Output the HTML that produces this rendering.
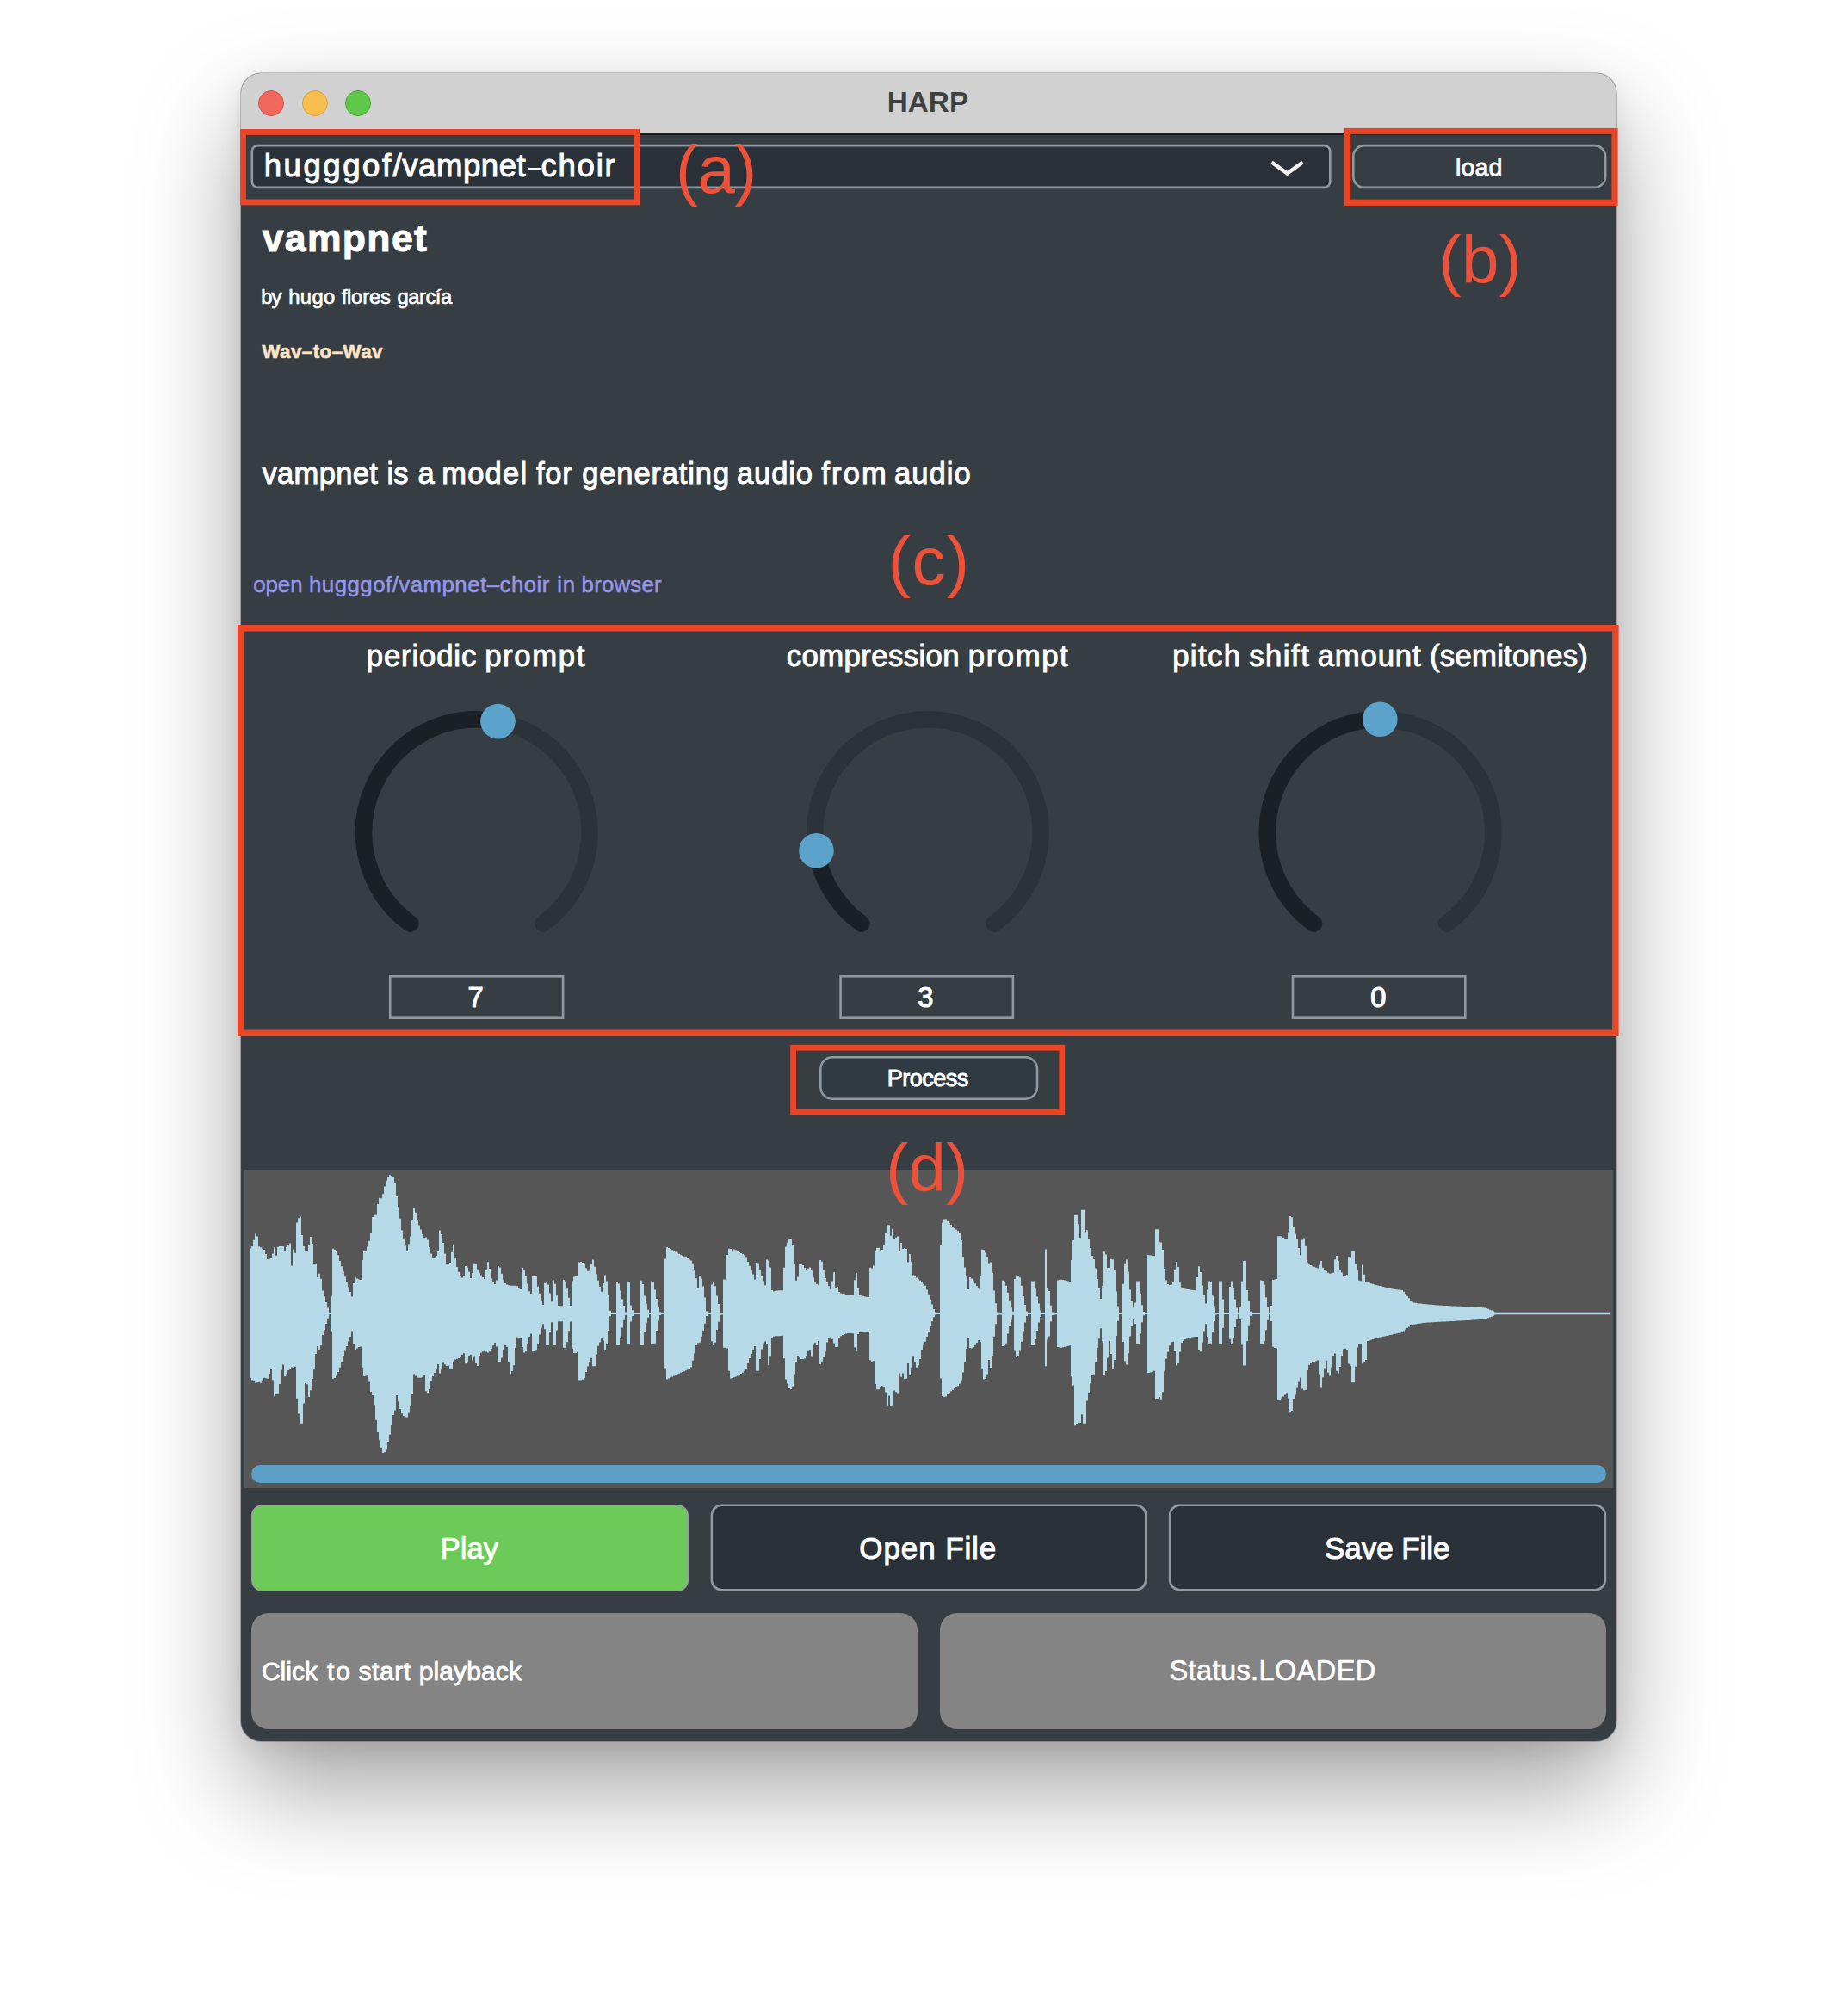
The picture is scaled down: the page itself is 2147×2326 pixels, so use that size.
<!DOCTYPE html>
<html><head><meta charset="utf-8"><title>HARP</title>
<style>

html,body{margin:0;padding:0;}
body{width:2147px;height:2326px;background:#fff;position:relative;overflow:hidden;font-family:"Liberation Sans",sans-serif;}
.abs{position:absolute;box-sizing:border-box;}
.t{position:absolute;line-height:1;white-space:pre;}
#win{left:280px;top:85px;width:1598px;height:1938px;border-radius:23.5px;background:#363e44;
  box-shadow:0 0 0 0.8px rgba(0,0,0,0.28), 0 54px 120px rgba(0,0,0,0.37), 0 10px 30px rgba(0,0,0,0.07);overflow:hidden;}
#titlebar{left:0;top:0;width:100%;height:72px;background:#d0d1d0;border-bottom:2px solid #181d23;}
.light{position:absolute;width:30px;height:30px;border-radius:50%;box-sizing:border-box;top:105px;}
.rb{position:absolute;box-sizing:border-box;border:7px solid #e94526;}
.btn{position:absolute;box-sizing:border-box;border:2px solid #9098a1;}
svg{position:absolute;left:0;top:0;}

</style></head><body>
<div id="win" class="abs">
<div id="titlebar" class="abs"></div>
</div>
<div class="light" style="left:299.9px;background:#f1675d;border:1px solid #d9534a;"></div>
<div class="light" style="left:350.8px;background:#f6be4f;border:1px solid #d8a23d;"></div>
<div class="light" style="left:401.2px;background:#5fc84a;border:1px solid #4aa73a;"></div>
<div class="abs" style="left:284.4px;top:1358.6px;width:1589.3px;height:370.9px;background:#565656;"></div>
<div class="abs" style="left:291.6px;top:1701.6px;width:1574.6px;height:21.1px;border-radius:11px;background:#5c9fc7;"></div>
<div class="btn" style="left:291.6px;top:1747.5px;width:508.4px;height:101px;border-radius:13px;background:#6cca58;border:2px solid #93a793;"></div>
<div class="abs" style="left:291.6px;top:1874px;width:774.7px;height:135px;border-radius:20px;background:#848484;"></div>
<div class="abs" style="left:1091.6px;top:1874px;width:774.6px;height:135px;border-radius:20px;background:#848484;"></div>
<svg width="2147" height="2326" viewBox="0 0 2147 2326">
<rect x="292.80" y="169.10" width="1252.50" height="48.80" rx="6.7" fill="#2a3138" stroke="#9098a1" stroke-width="2.6"/>
<rect x="1572.30" y="169.10" width="292.80" height="48.80" rx="12.7" fill="none" stroke="#9098a1" stroke-width="2.6"/>
<rect x="453.20" y="1134.30" width="200.90" height="48.40" rx="0.0" fill="none" stroke="#9098a1" stroke-width="2.6"/>
<rect x="976.60" y="1134.30" width="200.30" height="48.40" rx="0.0" fill="none" stroke="#9098a1" stroke-width="2.6"/>
<rect x="1502.00" y="1134.30" width="200.30" height="48.40" rx="0.0" fill="none" stroke="#9098a1" stroke-width="2.6"/>
<rect x="953.30" y="1228.30" width="251.70" height="48.40" rx="13.7" fill="#2f3a42" stroke="#9098a1" stroke-width="2.6"/>
<rect x="826.90" y="1748.80" width="504.40" height="98.40" rx="11.7" fill="#2a3138" stroke="#9098a1" stroke-width="2.6"/>
<rect x="1359.10" y="1748.80" width="505.80" height="98.40" rx="11.7" fill="#2a3138" stroke="#9098a1" stroke-width="2.6"/>
<path d="M1477.5 188.5 L1495.5 201.5 L1513.5 188.5" fill="none" stroke="#f2f2f2" stroke-width="4.6" stroke-linecap="butt" stroke-linejoin="miter"/>
<path d="M476.68 1073.14 A131.2 131.2 0 1 1 630.92 1073.14" fill="none" stroke="#2b3239" stroke-width="19.5" stroke-linecap="round"/>
<path d="M476.68 1073.14 A131.2 131.2 0 0 1 578.49 838.14" fill="none" stroke="#1b2025" stroke-width="19.5" stroke-linecap="round"/>
<circle cx="578.49" cy="838.14" r="20.3" fill="#5ca3cb"/>
<path d="M1000.78 1073.14 A131.2 131.2 0 1 1 1155.02 1073.14" fill="none" stroke="#2b3239" stroke-width="19.5" stroke-linecap="round"/>
<path d="M1000.78 1073.14 A131.2 131.2 0 0 1 948.44 988.33" fill="none" stroke="#1b2025" stroke-width="19.5" stroke-linecap="round"/>
<circle cx="948.44" cy="988.33" r="20.3" fill="#5ca3cb"/>
<path d="M1526.48 1073.14 A131.2 131.2 0 1 1 1680.72 1073.14" fill="none" stroke="#2b3239" stroke-width="19.5" stroke-linecap="round"/>
<path d="M1526.48 1073.14 A131.2 131.2 0 0 1 1603.30 835.80" fill="none" stroke="#1b2025" stroke-width="19.5" stroke-linecap="round"/>
<circle cx="1603.30" cy="835.80" r="20.3" fill="#5ca3cb"/>
<path d="M290 1450.6V1450.6H292V1447.9H294V1440.7H296V1433.5H298V1436.5H300V1448.3H302V1449.3H304V1450.6H306V1452.1H308V1457.1H310V1463.0H312V1462.5H314V1461.9H316V1456.6H318V1449.1H320V1458.8H322V1448.8H324V1448.1H326V1448.0H328V1448.0H330V1453.2H332V1449.1H334V1445.9H336V1444.6H338V1470.4H340V1451.5H342V1455.8H344V1420.4H346V1415.2H348V1413.5H350V1434.9H352V1448.1H354V1454.2H356V1453.1H358V1446.9H360V1436.9H362V1445.1H364V1467.9H366V1468.4H368V1483.9H370V1479.8H372V1485.7H374V1499.6H376V1506.3H378V1512.9H380V1519.4H382V1525.3H384V1505.6H386V1450.7H388V1451.8H390V1454.1H392V1458.3H394V1465.0H396V1471.2H398V1477.2H400V1483.2H402V1489.2H404V1495.2H406V1501.0H408V1506.5H410V1491.0H412V1484.2H414V1485.4H416V1486.6H418V1487.1H420V1463.9H422V1453.9H424V1453.4H426V1448.4H428V1441.8H430V1431.9H432V1413.9H434V1411.4H436V1411.6H438V1399.1H440V1391.8H442V1392.2H444V1387.3H446V1378.6H448V1371.8H450V1367.3H452V1365.3H454V1366.0H456V1368.1H458V1374.8H460V1389.9H462V1402.3H464V1415.8H466V1429.3H468V1438.7H470V1445.7H472V1454.1H474V1445.2H476V1436.5H478V1417.0H480V1403.8H482V1408.8H484V1417.0H486V1423.6H488V1428.6H490V1433.7H492V1438.3H494V1437.4H496V1440.5H498V1449.1H500V1456.5H502V1462.0H504V1461.7H506V1459.0H508V1454.0H510V1429.6H512V1433.9H514V1444.0H516V1456.6H518V1467.9H520V1468.1H522V1467.1H524V1454.7H526V1445.7H528V1462.2H530V1471.9H532V1477.7H534V1482.2H536V1484.5H538V1482.2H540V1470.9H542V1472.6H544V1477.6H546V1484.9H548V1479.1H550V1467.8H552V1468.3H554V1474.7H556V1478.7H558V1481.5H560V1484.0H562V1486.0H564V1476.0H566V1466.3H568V1474.0H570V1485.3H572V1489.2H574V1492.1H576V1487.5H578V1471.1H580V1472.5H582V1479.7H584V1486.5H586V1490.9H588V1492.4H590V1493.2H592V1493.7H594V1493.8H596V1493.8H598V1493.8H600V1494.3H602V1496.3H604V1498.0H606V1473.1H608V1475.7H610V1482.3H612V1491.6H614V1500.3H616V1503.0H618V1483.0H620V1482.4H622V1482.3H624V1494.7H626V1502.7H628V1510.7H630V1516.0H632V1490.8H634V1488.7H636V1492.6H638V1502.6H640V1512.2H642V1487.6H644V1491.7H646V1505.3H648V1517.0H650V1517.2H652V1517.2H654V1487.0H656V1489.5H658V1497.2H660V1507.7H662V1517.0H664V1488.5H666V1483.5H668V1483.0H670V1483.0H672V1466.6H674V1466.0H676V1466.9H678V1469.2H680V1473.2H682V1476.7H684V1476.6H686V1468.6H688V1463.6H690V1471.7H692V1480.3H694V1487.7H696V1494.8H698V1500.8H700V1491.1H702V1481.5H704V1488.5H706V1504.5H708V1522.8H710V1525.3H712V1525.3H714V1525.3H716V1489.0H718V1491.4H720V1499.5H722V1509.2H724V1517.1H726V1524.4H728V1488.7H730V1489.2H732V1516.5H734V1522.2H736V1525.3H738V1525.3H740V1525.3H742V1525.3H744V1487.8H746V1492.0H748V1505.5H750V1514.8H752V1521.7H754V1525.3H756V1488.2H758V1489.5H760V1498.6H762V1509.0H764V1518.4H766V1524.2H768V1525.3H770V1525.3H772V1462.6H774V1449.1H776V1450.0H778V1451.1H780V1452.3H782V1453.5H784V1454.6H786V1455.8H788V1456.8H790V1457.8H792V1458.8H794V1459.8H796V1460.8H798V1462.0H800V1463.3H802V1464.6H804V1467.8H806V1474.9H808V1485.2H810V1496.4H812V1482.0H814V1485.5H816V1494.4H818V1507.6H820V1523.4H822V1525.3H824V1525.3H826V1492.5H828V1489.1H830V1494.3H832V1505.6H834V1514.9H836V1525.3H838V1525.3H840V1486.6H842V1486.6H844V1457.9H846V1450.7H848V1451.1H850V1452.9H852V1451.6H854V1452.3H856V1453.6H858V1454.9H860V1456.0H862V1457.0H864V1458.2H866V1461.6H868V1465.9H870V1470.7H872V1475.7H874V1480.5H876V1486.4H878V1467.1H880V1467.5H882V1475.2H884V1483.0H886V1488.3H888V1493.3H890V1463.5H892V1464.5H894V1472.4H896V1499.1H898V1500.3H900V1499.9H902V1499.6H904V1499.2H906V1499.2H908V1499.2H910V1472.8H912V1448.6H914V1443.7H916V1439.2H918V1439.5H920V1445.9H922V1468.5H924V1487.8H926V1483.5H928V1468.7H930V1468.7H932V1469.9H934V1472.9H936V1474.9H938V1473.8H940V1472.5H942V1474.7H944V1484.3H946V1490.3H948V1491.8H950V1492.8H952V1463.9H954V1465.8H956V1475.5H958V1484.9H960V1489.9H962V1494.3H964V1498.3H966V1488.4H968V1478.3H970V1496.2H972V1494.9H974V1500.9H976V1502.4H978V1503.0H980V1503.5H982V1503.9H984V1504.1H986V1504.4H988V1504.6H990V1504.6H992V1487.3H994V1478.8H996V1496.7H998V1504.7H1000V1505.3H1002V1505.8H1004V1506.4H1006V1506.7H1008V1507.1H1010V1472.7H1012V1473.4H1014V1470.4H1016V1453.8H1018V1449.8H1020V1449.8H1022V1452.8H1024V1452.1H1026V1446.4H1028V1432.6H1030V1422.8H1032V1423.2H1034V1435.8H1036V1427.8H1038V1439.0H1040V1437.7H1042V1436.4H1044V1453.6H1046V1444.0H1048V1451.1H1050V1449.9H1052V1450.9H1054V1466.4H1056V1457.1H1058V1465.7H1060V1481.4H1062V1482.9H1064V1484.6H1066V1486.3H1068V1487.7H1070V1489.7H1072V1491.7H1074V1493.7H1076V1498.6H1078V1503.7H1080V1509.7H1082V1515.5H1084V1521.0H1086V1524.6H1088V1525.3H1090V1525.3H1092V1446.6H1094V1420.7H1096V1416.6H1098V1416.3H1100V1418.8H1102V1421.0H1104V1423.0H1106V1425.0H1108V1426.8H1110V1428.5H1112V1430.2H1114V1432.6H1116V1441.0H1118V1460.6H1120V1472.5H1122V1483.2H1124V1497.9H1126V1484.0H1128V1485.4H1130V1488.2H1132V1491.2H1134V1494.2H1136V1497.2H1138V1482.6H1140V1451.7H1142V1452.3H1144V1455.6H1146V1460.5H1148V1467.6H1150V1466.6H1152V1479.0H1154V1499.6H1156V1514.2H1158V1524.4H1160V1524.7H1162V1525.0H1164V1487.7H1166V1489.4H1168V1493.7H1170V1501.7H1172V1510.8H1174V1518.4H1176V1523.8H1178V1486.1H1180V1481.4H1182V1482.2H1184V1484.2H1186V1493.7H1188V1506.0H1190V1516.0H1192V1523.4H1194V1525.3H1196V1525.3H1198V1488.4H1200V1488.4H1202V1497.5H1204V1506.4H1206V1514.4H1208V1522.4H1210V1525.3H1212V1525.3H1214V1451.6H1216V1496.0H1218V1499.9H1220V1516.8H1222V1524.5H1224V1524.7H1226V1525.0H1228V1487.4H1230V1486.9H1232V1486.7H1234V1487.1H1236V1487.6H1238V1488.1H1240V1488.6H1242V1489.1H1244V1464.0H1246V1441.1H1248V1411.7H1250V1411.8H1252V1422.2H1254V1438.2H1256V1405.7H1258V1405.7H1260V1431.3H1262V1429.2H1264V1439.2H1266V1450.1H1268V1459.1H1270V1463.1H1272V1473.4H1274V1486.1H1276V1497.1H1278V1509.1H1280V1493.8H1282V1454.3H1284V1457.5H1286V1472.9H1288V1473.0H1290V1462.7H1292V1463.3H1294V1475.4H1296V1500.5H1298V1517.5H1300V1525.3H1302V1525.3H1304V1491.7H1306V1467.8H1308V1463.5H1310V1477.5H1312V1498.5H1314V1511.4H1316V1519.2H1318V1513.6H1320V1488.4H1322V1488.4H1324V1502.8H1326V1516.2H1328V1524.1H1330V1525.3H1332V1458.0H1334V1458.2H1336V1458.6H1338V1459.0H1340V1459.3H1342V1428.2H1344V1428.2H1346V1442.8H1348V1443.4H1350V1452.1H1352V1473.9H1354V1487.4H1356V1492.1H1358V1492.9H1360V1492.4H1362V1490.1H1364V1475.9H1366V1466.0H1368V1471.9H1370V1490.2H1372V1495.8H1374V1496.6H1376V1497.4H1378V1497.7H1380V1498.1H1382V1498.4H1384V1498.7H1386V1499.1H1388V1499.2H1390V1484.1H1392V1471.3H1394V1478.1H1396V1493.6H1398V1504.8H1400V1514.5H1402V1498.5H1404V1488.4H1406V1490.1H1408V1505.3H1410V1517.3H1412V1525.0H1414V1525.3H1416V1488.4H1418V1488.4H1420V1509.5H1422V1525.3H1424V1525.3H1426V1525.3H1428V1495.1H1430V1488.4H1432V1496.7H1434V1509.4H1436V1519.6H1438V1525.3H1440V1519.1H1442V1488.4H1444V1465.1H1446V1465.1H1448V1499.1H1450V1511.7H1452V1523.7H1454V1525.3H1456V1525.3H1458V1525.3H1460V1525.3H1462V1525.3H1464V1487.6H1466V1487.9H1468V1492.8H1470V1507.2H1472V1518.6H1474V1525.3H1476V1517.0H1478V1487.1H1480V1486.5H1482V1486.0H1484V1436.3H1486V1436.3H1488V1436.3H1490V1437.8H1492V1439.8H1494V1439.8H1496V1431.4H1498V1412.9H1500V1414.2H1502V1425.6H1504V1433.5H1506V1440.1H1508V1449.9H1510V1458.3H1512V1440.4H1514V1438.5H1516V1447.7H1518V1466.8H1520V1469.3H1522V1469.9H1524V1470.7H1526V1471.7H1528V1472.7H1530V1473.4H1532V1469.4H1534V1465.1H1536V1472.8H1538V1475.3H1540V1477.0H1542V1478.8H1544V1479.8H1546V1479.4H1548V1478.7H1550V1463.3H1552V1459.1H1554V1465.2H1556V1475.2H1558V1478.5H1560V1482.3H1562V1483.0H1564V1481.2H1566V1460.6H1568V1461.4H1570V1453.4H1572V1453.4H1574V1468.3H1576V1475.8H1578V1487.7H1580V1488.2H1582V1469.6H1584V1480.7H1586V1489.4H1588V1489.7H1590V1490.5H1592V1491.2H1594V1491.7H1596V1492.3H1598V1492.9H1600V1493.4H1602V1494.0H1604V1494.6H1606V1495.1H1608V1495.5H1610V1495.9H1612V1496.3H1614V1496.8H1616V1497.2H1618V1497.6H1620V1497.9H1622V1498.2H1624V1498.5H1626V1498.8H1628V1499.1H1630V1500.8H1632V1503.2H1634V1505.7H1636V1508.3H1638V1511.0H1640V1512.5H1642V1513.5H1644V1513.8H1646V1514.1H1648V1514.4H1650V1514.6H1652V1514.9H1654V1515.1H1656V1515.3H1658V1515.5H1660V1515.7H1662V1515.8H1664V1516.0H1666V1516.2H1668V1516.4H1670V1516.6H1672V1516.7H1674V1516.8H1676V1516.9H1678V1517.0H1680V1517.1H1682V1517.2H1684V1517.3H1686V1517.4H1688V1517.5H1690V1517.6H1692V1517.7H1694V1517.7H1696V1517.8H1698V1517.9H1700V1518.0H1702V1518.0H1704V1518.1H1706V1518.2H1708V1518.2H1710V1518.4H1712V1518.5H1714V1518.7H1716V1518.8H1718V1519.0H1720V1519.1H1722V1519.3H1724V1519.5H1726V1520.0H1728V1520.8H1730V1521.7H1732V1522.5H1734V1523.5H1736V1524.5H1738V1524.7H1740V1524.7H1742V1524.7H1744V1524.7H1746V1524.7H1748V1524.7H1750V1524.7H1752V1524.7H1754V1524.7H1756V1524.7H1758V1524.7H1760V1524.7H1762V1524.7H1764V1524.7H1766V1524.7H1768V1524.7H1770V1524.7H1772V1524.7H1774V1524.7H1776V1524.7H1778V1524.7H1780V1524.7H1782V1524.7H1784V1524.7H1786V1524.7H1788V1524.7H1790V1524.7H1792V1524.7H1794V1524.7H1796V1524.7H1798V1524.7H1800V1524.7H1802V1524.7H1804V1524.7H1806V1524.7H1808V1524.7H1810V1524.7H1812V1524.7H1814V1524.7H1816V1524.7H1818V1524.7H1820V1524.7H1822V1524.7H1824V1524.7H1826V1524.7H1828V1524.7H1830V1524.7H1832V1524.7H1834V1524.7H1836V1524.7H1838V1524.7H1840V1524.7H1842V1524.7H1844V1524.7H1846V1524.7H1848V1524.7H1850V1524.7H1852V1524.7H1854V1524.7H1856V1524.7H1858V1524.7H1860V1524.7H1862V1524.7H1864V1524.7H1866V1524.7H1868V1524.7H1870V1527.3H1868V1527.3H1866V1527.3H1864V1527.3H1862V1527.3H1860V1527.3H1858V1527.3H1856V1527.3H1854V1527.3H1852V1527.3H1850V1527.3H1848V1527.3H1846V1527.3H1844V1527.3H1842V1527.3H1840V1527.3H1838V1527.3H1836V1527.3H1834V1527.3H1832V1527.3H1830V1527.3H1828V1527.3H1826V1527.3H1824V1527.3H1822V1527.3H1820V1527.3H1818V1527.3H1816V1527.3H1814V1527.3H1812V1527.3H1810V1527.3H1808V1527.3H1806V1527.3H1804V1527.3H1802V1527.3H1800V1527.3H1798V1527.3H1796V1527.3H1794V1527.3H1792V1527.3H1790V1527.3H1788V1527.3H1786V1527.3H1784V1527.3H1782V1527.3H1780V1527.3H1778V1527.3H1776V1527.3H1774V1527.3H1772V1527.3H1770V1527.3H1768V1527.3H1766V1527.3H1764V1527.3H1762V1527.3H1760V1527.3H1758V1527.3H1756V1527.3H1754V1527.3H1752V1527.3H1750V1527.3H1748V1527.3H1746V1527.3H1744V1527.3H1742V1527.3H1740V1527.3H1738V1527.6H1736V1528.7H1734V1529.8H1732V1530.6H1730V1531.3H1728V1532.1H1726V1532.5H1724V1532.7H1722V1532.9H1720V1533.0H1718V1533.2H1716V1533.3H1714V1533.5H1712V1533.6H1710V1533.8H1708V1533.9H1706V1534.0H1704V1534.1H1702V1534.2H1700V1534.3H1698V1534.4H1696V1534.5H1694V1534.6H1692V1534.8H1690V1534.9H1688V1535.0H1686V1535.1H1684V1535.2H1682V1535.3H1680V1535.4H1678V1535.5H1676V1535.6H1674V1535.7H1672V1535.8H1670V1535.9H1668V1536.1H1666V1536.2H1664V1536.3H1662V1536.5H1660V1536.6H1658V1536.8H1656V1536.9H1654V1537.1H1652V1537.5H1650V1537.8H1648V1538.1H1646V1538.5H1644V1538.8H1642V1539.3H1640V1540.1H1638V1541.4H1636V1542.7H1634V1544.5H1632V1546.5H1630V1547.9H1628V1548.4H1626V1548.8H1624V1549.3H1622V1549.8H1620V1550.2H1618V1550.7H1616V1551.1H1614V1551.5H1612V1552.0H1610V1552.4H1608V1552.8H1606V1553.3H1604V1553.8H1602V1554.4H1600V1555.0H1598V1555.6H1596V1556.1H1594V1556.7H1592V1557.4H1590V1558.1H1588V1580.1H1586V1582.7H1584V1584.6H1582V1561.2H1580V1561.2H1578V1565.5H1576V1587.7H1574V1606.2H1572V1606.2H1570V1586.7H1568V1584.6H1566V1567.9H1564V1566.7H1562V1567.4H1560V1575.1H1558V1587.9H1556V1595.4H1554V1592.8H1552V1572.5H1550V1575.4H1548V1588.4H1546V1598.6H1544V1594.7H1542V1580.8H1540V1589.4H1538V1600.2H1536V1612.5H1534V1596.5H1532V1580.5H1530V1581.3H1528V1582.0H1526V1582.7H1524V1584.1H1522V1585.8H1520V1591.9H1518V1614.8H1516V1615.2H1514V1613.6H1512V1600.6H1510V1605.6H1508V1612.5H1506V1620.5H1504V1625.0H1502V1639.1H1500V1641.2H1498V1624.7H1496V1619.2H1494V1620.6H1492V1622.6H1490V1624.5H1488V1626.0H1486V1626.8H1484V1566.4H1482V1565.9H1480V1564.8H1478V1535.1H1476V1527.1H1474V1533.7H1472V1545.2H1470V1558.3H1468V1562.1H1466V1562.1H1464V1527.1H1462V1527.1H1460V1527.1H1458V1527.1H1456V1527.1H1454V1528.7H1452V1540.7H1450V1558.3H1448V1586.4H1446V1586.4H1444V1562.6H1442V1533.0H1440V1527.1H1438V1532.7H1436V1542.0H1434V1553.8H1432V1562.1H1430V1555.8H1428V1527.1H1426V1527.1H1424V1527.1H1422V1542.7H1420V1562.1H1418V1562.1H1416V1527.1H1414V1527.4H1412V1535.1H1410V1547.1H1408V1560.7H1406V1562.1H1404V1553.0H1402V1538.3H1400V1546.6H1398V1559.8H1396V1570.2H1394V1568.3H1392V1553.1H1390V1553.1H1388V1553.3H1386V1553.6H1384V1554.0H1382V1554.6H1380V1555.2H1378V1556.0H1376V1558.0H1374V1560.0H1372V1570.7H1370V1584.1H1368V1586.4H1366V1569.9H1364V1558.7H1362V1559.2H1360V1563.3H1358V1570.7H1356V1578.7H1354V1593.4H1352V1617.3H1350V1625.7H1348V1623.0H1346V1625.1H1344V1625.1H1342V1592.8H1340V1593.8H1338V1594.6H1336V1595.1H1334V1595.3H1332V1527.1H1330V1528.3H1328V1536.2H1326V1549.5H1324V1562.1H1322V1562.1H1320V1538.2H1318V1533.1H1316V1541.0H1314V1552.6H1312V1572.2H1310V1585.5H1308V1581.3H1306V1559.1H1304V1527.1H1302V1527.1H1300V1534.8H1298V1551.9H1296V1580.1H1294V1590.7H1292V1573.1H1290V1558.2H1288V1577.4H1286V1593.1H1284V1597.1H1282V1558.2H1280V1543.3H1278V1555.3H1276V1565.8H1274V1582.3H1272V1596.8H1270V1597.8H1268V1607.2H1266V1619.0H1264V1627.6H1262V1653.8H1260V1653.8H1258V1643.2H1256V1652.9H1254V1652.9H1252V1655.1H1250V1656.3H1248V1609.5H1246V1599.3H1244V1563.3H1242V1563.8H1240V1564.3H1238V1564.8H1236V1565.3H1234V1565.7H1232V1565.4H1230V1565.0H1228V1527.3H1226V1527.6H1224V1527.9H1222V1535.6H1220V1552.5H1218V1556.4H1216V1587.3H1214V1527.1H1212V1527.1H1210V1529.9H1208V1536.6H1206V1545.9H1204V1555.9H1202V1563.0H1200V1563.0H1198V1527.1H1196V1527.1H1194V1529.0H1192V1536.4H1190V1546.4H1188V1558.7H1186V1569.4H1184V1574.9H1182V1577.1H1180V1569.5H1178V1527.8H1176V1533.6H1174V1540.9H1172V1549.4H1170V1560.7H1168V1563.6H1166V1563.9H1164V1527.4H1162V1527.6H1160V1527.9H1158V1538.2H1156V1552.7H1154V1575.3H1152V1589.1H1150V1580.1H1148V1596.4H1146V1602.1H1144V1602.4H1142V1589.8H1140V1559.2H1138V1556.9H1136V1559.9H1134V1562.8H1132V1565.3H1130V1566.6H1128V1566.0H1126V1554.6H1124V1567.1H1122V1582.4H1120V1594.5H1118V1603.4H1116V1607.7H1114V1610.3H1112V1611.7H1110V1613.2H1108V1614.7H1106V1616.3H1104V1618.0H1102V1620.1H1100V1622.6H1098V1623.0H1096V1622.1H1094V1601.5H1092V1527.1H1090V1527.1H1088V1527.4H1086V1530.2H1084V1535.2H1082V1540.9H1080V1546.9H1078V1552.9H1076V1558.8H1074V1562.8H1072V1568.5H1070V1579.1H1068V1586.2H1066V1588.7H1064V1582.7H1062V1576.2H1060V1588.7H1058V1597.9H1056V1583.9H1054V1601.8H1052V1602.3H1050V1595.5H1048V1599.8H1046V1595.5H1044V1619.5H1042V1617.3H1040V1615.4H1038V1632.8H1036V1633.7H1034V1621.5H1032V1632.7H1030V1617.5H1028V1610.9H1026V1610.3H1024V1611.2H1022V1614.3H1020V1614.3H1018V1607.9H1016V1581.2H1014V1582.8H1012V1580.2H1010V1546.9H1008V1546.9H1006V1546.9H1004V1547.1H1002V1547.4H1000V1547.7H998V1550.0H996V1570.2H994V1565.3H992V1549.3H990V1548.9H988V1548.9H986V1549.1H984V1549.4H982V1549.9H980V1551.0H978V1552.2H976V1554.8H974V1564.8H972V1565.0H970V1560.5H968V1555.7H966V1553.4H964V1554.4H962V1559.6H960V1570.6H958V1577.2H956V1581.8H954V1584.9H952V1558.1H950V1563.1H948V1560.1H946V1562.5H944V1576.5H942V1568.3H940V1569.7H938V1575.1H936V1578.5H934V1579.0H932V1579.0H930V1577.0H928V1575.2H926V1581.9H924V1596.5H922V1610.8H920V1614.1H918V1612.9H916V1607.2H914V1602.4H912V1578.2H910V1551.8H908V1552.1H906V1552.2H904V1552.2H902V1552.2H900V1552.7H898V1554.6H896V1576.2H894V1586.2H892V1561.0H890V1558.6H888V1562.6H886V1567.5H884V1578.9H882V1592.7H880V1592.7H878V1564.1H876V1568.6H874V1573.0H872V1578.0H870V1584.0H868V1589.9H866V1593.2H864V1594.8H862V1596.1H860V1597.4H858V1598.4H856V1599.4H854V1600.2H852V1600.9H850V1601.5H848V1592.8H846V1566.4H844V1565.7H842V1565.7H840V1527.5H838V1528.0H836V1535.7H834V1545.0H832V1559.7H830V1563.0H828V1558.3H826V1527.1H824V1527.1H822V1528.9H820V1537.8H818V1545.8H816V1552.8H814V1559.7H812V1560.2H810V1563.0H808V1572.6H806V1580.8H804V1588.6H802V1590.0H800V1591.3H798V1592.3H796V1593.2H794V1594.0H792V1594.8H790V1595.7H788V1596.5H786V1597.5H784V1598.5H782V1599.5H780V1600.5H778V1601.5H776V1602.4H774V1589.5H772V1527.1H770V1527.1H768V1528.1H766V1534.5H764V1545.9H762V1560.7H760V1562.1H758V1562.1H756V1527.1H754V1530.7H752V1537.6H750V1546.9H748V1563.0H746V1563.0H744V1527.1H742V1527.1H740V1527.1H738V1527.1H736V1528.9H734V1535.5H732V1561.2H730V1561.2H728V1527.8H726V1533.8H724V1542.4H722V1555.0H720V1563.0H718V1563.0H716V1527.1H714V1527.1H712V1527.1H710V1529.3H708V1546.1H706V1562.1H704V1569.1H702V1557.5H700V1554.1H698V1559.5H696V1563.7H694V1573.6H692V1587.3H690V1587.3H688V1577.7H686V1581.9H684V1587.4H682V1594.0H680V1600.7H678V1602.8H676V1603.5H674V1603.5H672V1570.7H670V1572.0H668V1572.0H666V1566.9H664V1535.6H662V1546.3H660V1559.3H658V1565.7H656V1565.7H654V1535.2H652V1535.2H650V1535.4H648V1545.4H646V1563.0H644V1563.0H642V1536.2H640V1547.1H638V1563.0H636V1563.0H634V1544.2H632V1538.2H630V1542.6H628V1550.4H626V1561.7H624V1569.2H622V1569.9H620V1570.2H618V1549.6H616V1552.9H614V1561.6H612V1570.3H610V1571.6H608V1565.0H606V1554.7H604V1554.0H602V1553.5H600V1566.3H598V1586.3H596V1593.1H594V1596.2H592V1582.4H590V1564.7H588V1562.8H586V1568.6H584V1577.5H582V1581.9H580V1582.1H578V1564.4H576V1559.9H574V1563.2H572V1567.1H570V1570.2H568V1571.5H566V1570.6H564V1569.7H562V1570.2H560V1571.7H558V1575.0H556V1587.0H554V1584.0H552V1576.4H550V1580.4H548V1573.8H546V1576.1H544V1581.8H542V1584.2H540V1572.2H538V1573.8H536V1576.9H534V1577.9H532V1578.7H530V1579.6H528V1581.7H526V1591.0H524V1590.7H522V1586.4H520V1587.0H518V1585.2H516V1583.4H514V1589.8H512V1595.5H510V1584.9H508V1590.9H506V1594.9H504V1598.9H502V1604.6H500V1613.9H498V1618.1H496V1616.2H494V1597.7H492V1600.1H490V1600.8H488V1600.8H486V1600.4H484V1598.4H482V1596.6H480V1619.9H478V1633.7H476V1641.7H474V1646.6H472V1646.6H470V1645.3H468V1642.3H466V1637.0H464V1628.3H462V1620.9H460V1638.6H458V1644.0H456V1656.0H454V1666.7H452V1674.9H450V1684.3H448V1687.2H446V1687.9H444V1681.7H442V1673.4H440V1663.9H438V1649.7H436V1632.2H434V1621.0H432V1617.0H430V1605.5H428V1597.8H426V1598.4H424V1598.9H422V1588.8H420V1564.4H418V1564.9H416V1566.5H414V1568.1H412V1561.3H410V1546.5H408V1552.9H406V1558.6H404V1564.1H402V1569.6H400V1575.2H398V1582.2H396V1588.8H394V1594.1H392V1598.8H390V1601.1H388V1601.7H386V1546.7H384V1527.1H382V1531.7H380V1538.0H378V1545.0H376V1551.1H374V1563.2H372V1568.8H370V1563.9H368V1572.9H366V1591.2H364V1602.0H362V1615.2H360V1622.9H358V1608.3H356V1607.1H354V1630.5H352V1653.8H350V1653.8H348V1642.5H346V1624.7H344V1587.8H342V1588.9H340V1588.5H338V1590.1H336V1592.1H334V1596.5H332V1599.2H330V1585.4H328V1591.7H326V1607.9H324V1619.7H322V1619.7H320V1622.5H318V1603.2H316V1590.9H314V1595.9H312V1601.7H310V1601.2H308V1600.8H306V1604.8H304V1606.8H302V1605.7H300V1606.3H298V1606.7H296V1605.1H294V1603.5H292V1600.9H290Z" fill="#b6d9e8"/>
</svg>
<svg width="2147" height="2326" viewBox="0 0 2147 2326">
<rect x="282.45" y="153.45" width="457.30" height="81.50" fill="none" stroke="#e94526" stroke-width="6.9"/>
<rect x="1565.60" y="152.50" width="310.40" height="82.80" fill="none" stroke="#e94526" stroke-width="7.2"/>
<rect x="279.75" y="729.75" width="1597.10" height="470.50" fill="none" stroke="#e94526" stroke-width="7.5"/>
<rect x="921.60" y="1217.20" width="312.20" height="74.80" fill="none" stroke="#e94526" stroke-width="6.8"/>
</svg>
<div class="t " style="left:1030.75px;top:101.61px;font-size:33.30px;color:#404040;font-weight:bold;">HARP</div>
<div class="t " style="left:306.74px;top:175.02px;font-size:36.60px;color:#fff;letter-spacing:2.514px;-webkit-text-stroke:1.02px #fff;">hugggof/</div>
<div class="t " style="left:467.31px;top:175.02px;font-size:36.60px;color:#fff;letter-spacing:0.518px;-webkit-text-stroke:1.02px #fff;">vampnet</div>
<div class="t " style="left:628.44px;top:175.02px;font-size:36.60px;color:#fff;letter-spacing:1.744px;-webkit-text-stroke:1.02px #fff;">choir</div>
<div class="t " style="left:1691.08px;top:179.67px;font-size:28.50px;color:#fff;letter-spacing:0.147px;-webkit-text-stroke:0.80px #fff;">load</div>
<div class="t " style="left:304.68px;top:254.63px;font-size:44.50px;color:#fff;letter-spacing:1.362px;font-weight:bold;-webkit-text-stroke:0.98px #fff;">vampnet</div>
<div class="t " style="left:303.35px;top:333.15px;font-size:23.80px;color:#fff;letter-spacing:-1.102px;-webkit-text-stroke:0.67px #fff;">by</div>
<div class="t " style="left:335.13px;top:333.15px;font-size:23.80px;color:#fff;letter-spacing:0.407px;-webkit-text-stroke:0.67px #fff;">hugo</div>
<div class="t " style="left:396.64px;top:333.15px;font-size:23.80px;color:#fff;letter-spacing:-0.200px;-webkit-text-stroke:0.67px #fff;">flores</div>
<div class="t " style="left:461.49px;top:333.15px;font-size:23.80px;color:#fff;letter-spacing:-0.490px;-webkit-text-stroke:0.67px #fff;">garcía</div>
<div class="t " style="left:304.40px;top:397.71px;font-size:22.20px;color:#fde3c6;letter-spacing:0.534px;font-weight:bold;-webkit-text-stroke:0.67px #fde3c6;">Wav–to–Wav</div>
<div class="t " style="left:304.41px;top:532.60px;font-size:34.50px;color:#fff;letter-spacing:0.356px;-webkit-text-stroke:0.97px #fff;">vampnet</div>
<div class="t " style="left:449.47px;top:532.60px;font-size:34.50px;color:#fff;letter-spacing:0.210px;-webkit-text-stroke:0.97px #fff;">is</div>
<div class="t " style="left:485.53px;top:532.60px;font-size:34.50px;color:#fff;-webkit-text-stroke:0.97px #fff;">a</div>
<div class="t " style="left:513.17px;top:532.60px;font-size:34.50px;color:#fff;letter-spacing:1.236px;-webkit-text-stroke:0.97px #fff;">model</div>
<div class="t " style="left:622.88px;top:532.60px;font-size:34.50px;color:#fff;letter-spacing:0.828px;-webkit-text-stroke:0.97px #fff;">for</div>
<div class="t " style="left:676.23px;top:532.60px;font-size:34.50px;color:#fff;letter-spacing:0.868px;-webkit-text-stroke:0.97px #fff;">generating</div>
<div class="t " style="left:855.93px;top:532.60px;font-size:34.50px;color:#fff;letter-spacing:0.923px;-webkit-text-stroke:0.97px #fff;">audio</div>
<div class="t " style="left:954.28px;top:532.60px;font-size:34.50px;color:#fff;letter-spacing:2.153px;-webkit-text-stroke:0.97px #fff;">from</div>
<div class="t " style="left:1039.03px;top:532.60px;font-size:34.50px;color:#fff;letter-spacing:1.048px;-webkit-text-stroke:0.97px #fff;">audio</div>
<div class="t " style="left:294.20px;top:666.96px;font-size:25.80px;color:#9496ee;letter-spacing:-0.011px;-webkit-text-stroke:0.52px #9496ee;">open</div>
<div class="t " style="left:358.99px;top:666.96px;font-size:25.80px;color:#9496ee;letter-spacing:0.491px;-webkit-text-stroke:0.52px #9496ee;">hugggof/vampnet–choir</div>
<div class="t " style="left:647.16px;top:666.96px;font-size:25.80px;color:#9496ee;letter-spacing:0.895px;-webkit-text-stroke:0.52px #9496ee;">in</div>
<div class="t " style="left:675.62px;top:666.96px;font-size:25.80px;color:#9496ee;letter-spacing:0.208px;-webkit-text-stroke:0.52px #9496ee;">browser</div>
<div class="t " style="left:425.74px;top:745.33px;font-size:34.70px;color:#fff;letter-spacing:0.868px;-webkit-text-stroke:0.97px #fff;">periodic</div>
<div class="t " style="left:563.14px;top:745.33px;font-size:34.70px;color:#fff;letter-spacing:1.662px;-webkit-text-stroke:0.97px #fff;">prompt</div>
<div class="t " style="left:913.73px;top:745.33px;font-size:34.70px;color:#fff;letter-spacing:0.418px;-webkit-text-stroke:0.97px #fff;">compression</div>
<div class="t " style="left:1124.74px;top:745.33px;font-size:34.70px;color:#fff;letter-spacing:1.602px;-webkit-text-stroke:0.97px #fff;">prompt</div>
<div class="t " style="left:1362.14px;top:745.33px;font-size:34.70px;color:#fff;letter-spacing:1.427px;-webkit-text-stroke:0.97px #fff;">pitch</div>
<div class="t " style="left:1451.15px;top:745.33px;font-size:34.70px;color:#fff;letter-spacing:1.532px;-webkit-text-stroke:0.97px #fff;">shift</div>
<div class="t " style="left:1530.63px;top:745.33px;font-size:34.70px;color:#fff;letter-spacing:0.842px;-webkit-text-stroke:0.97px #fff;">amount</div>
<div class="t " style="left:1661.03px;top:745.33px;font-size:34.70px;color:#fff;letter-spacing:0.263px;-webkit-text-stroke:0.97px #fff;">(semitones)</div>
<div class="t " style="left:543.45px;top:1142.70px;font-size:32.60px;color:#fff;-webkit-text-stroke:1.17px #fff;">7</div>
<div class="t " style="left:1066.33px;top:1142.70px;font-size:32.60px;color:#fff;-webkit-text-stroke:1.17px #fff;">3</div>
<div class="t " style="left:1592.31px;top:1142.70px;font-size:32.60px;color:#fff;-webkit-text-stroke:1.17px #fff;">0</div>
<div class="t " style="left:1030.77px;top:1239.64px;font-size:27.00px;color:#fff;letter-spacing:-0.527px;-webkit-text-stroke:0.97px #fff;">Process</div>
<div class="t " style="left:511.51px;top:1781.27px;font-size:35.00px;color:#fff;letter-spacing:-0.167px;-webkit-text-stroke:0.70px #fff;">Play</div>
<div class="t " style="left:998.34px;top:1781.37px;font-size:35.00px;color:#fff;letter-spacing:0.891px;-webkit-text-stroke:0.98px #fff;">Open File</div>
<div class="t " style="left:1539.02px;top:1781.37px;font-size:35.00px;color:#fff;letter-spacing:-0.050px;-webkit-text-stroke:0.98px #fff;">Save File</div>
<div class="t " style="left:303.90px;top:1927.40px;font-size:30.00px;color:#fff;letter-spacing:0.044px;-webkit-text-stroke:0.84px #fff;">Click</div>
<div class="t " style="left:379.95px;top:1927.40px;font-size:30.00px;color:#fff;letter-spacing:1.975px;-webkit-text-stroke:0.84px #fff;">to</div>
<div class="t " style="left:416.48px;top:1927.40px;font-size:30.00px;color:#fff;letter-spacing:0.625px;-webkit-text-stroke:0.84px #fff;">start</div>
<div class="t " style="left:486.85px;top:1927.40px;font-size:30.00px;color:#fff;letter-spacing:0.075px;-webkit-text-stroke:0.84px #fff;">playback</div>
<div class="t " style="left:1358.54px;top:1925.19px;font-size:32.50px;color:#fff;letter-spacing:0.408px;-webkit-text-stroke:0.65px #fff;">Status.LOADED</div>
<div class="t " style="left:785.12px;top:157.57px;font-size:78.00px;color:#ee5139;letter-spacing:-0.650px;">(a)</div>
<div class="t " style="left:1671.62px;top:262.97px;font-size:78.00px;color:#ee5139;letter-spacing:0.350px;">(b)</div>
<div class="t " style="left:1031.83px;top:612.67px;font-size:78.00px;color:#ee5139;letter-spacing:1.642px;">(c)</div>
<div class="t " style="left:1029.22px;top:1318.27px;font-size:78.00px;color:#ee5139;letter-spacing:0.200px;">(d)</div>
<div class="abs" style="left:612.6px;top:195px;width:15.2px;height:3.0px;background:#fff;"></div>
</body></html>
